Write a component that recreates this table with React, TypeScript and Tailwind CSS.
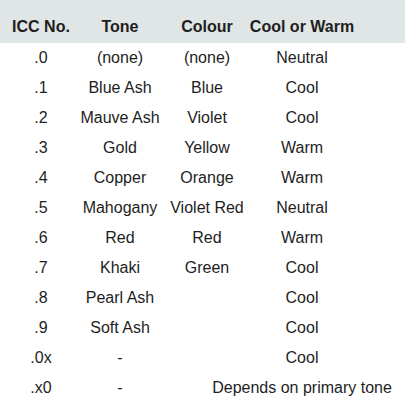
import React from 'react';

const rows: [string, string, string, string][] = [
  ['.0', '(none)', '(none)', 'Neutral'],
  ['.1', 'Blue Ash', 'Blue', 'Cool'],
  ['.2', 'Mauve Ash', 'Violet', 'Cool'],
  ['.3', 'Gold', 'Yellow', 'Warm'],
  ['.4', 'Copper', 'Orange', 'Warm'],
  ['.5', 'Mahogany', 'Violet Red', 'Neutral'],
  ['.6', 'Red', 'Red', 'Warm'],
  ['.7', 'Khaki', 'Green', 'Cool'],
  ['.8', 'Pearl Ash', '', 'Cool'],
  ['.9', 'Soft Ash', '', 'Cool'],
  ['.0x', '-', '', 'Cool'],
  ['.x0', '-', '', 'Depends on primary tone'],
];

const cols = 'grid grid-cols-[82px_76px_98px_92px]';

const Cell: React.FC<{ children: React.ReactNode }> = ({ children }) => (
  <div className="flex justify-center whitespace-nowrap">{children}</div>
);

export default function App() {
  return (
    <div className="w-[405px] h-[414px] bg-white text-[#1e1e1e] text-[16px] leading-[18px] font-['Liberation_Sans',Arial,sans-serif]">
      <div className="h-[43px] bg-[#e0e5e5] pt-[18px]">
        <div className={`${cols} font-bold`}>
          <Cell>ICC No.</Cell>
          <Cell>Tone</Cell>
          <Cell>Colour</Cell>
          <Cell>Cool or Warm</Cell>
        </div>
      </div>
      {rows.map((r) => (
        <div key={r[0]} className={`${cols} h-[30px] items-center`}>
          <Cell>{r[0]}</Cell>
          <Cell>{r[1]}</Cell>
          <Cell>{r[2]}</Cell>
          <Cell>{r[3]}</Cell>
        </div>
      ))}
    </div>
  );
}
